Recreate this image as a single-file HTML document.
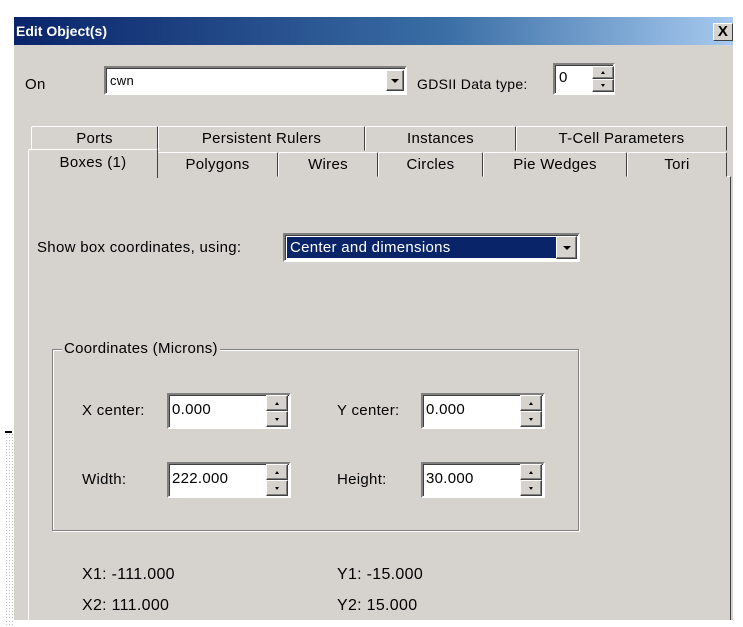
<!DOCTYPE html>
<html><head><style>
*{margin:0;padding:0;box-sizing:border-box}
body{width:743px;height:627px;background:#fff;position:relative;overflow:hidden;font-family:"Liberation Sans",sans-serif;font-size:15px;letter-spacing:0.3px;color:#000}
.a{position:absolute}
.dlg{left:14px;top:17px;width:719px;height:603px;background:#d6d3ce}
.title{left:14px;top:17px;width:719px;height:28px;background:linear-gradient(90deg,#0a246a,#3a6ea5 60%,#a6caf0);color:#fff;font-weight:bold;font-size:14px;letter-spacing:0;line-height:28px;padding-left:2px}
.close{left:713px;top:23px;width:20px;height:18px;background:#d6d3ce;border:1px solid;border-color:#fff #404040 #404040 #fff;font-weight:bold;font-size:15px;line-height:16px;text-align:center}
.sunk{background:#fff;border:2px solid;border-color:#808080 #fff #fff #808080;box-shadow:inset 1px 1px 0 #404040}
.btn{background:#d6d3ce;border:1px solid;border-color:#fff #404040 #404040 #fff;box-shadow:inset -1px -1px 0 #808080}
.tab{background:#d6d3ce;border:1px solid;border-color:#fff #404040 transparent #fff;border-radius:2px 2px 0 0;text-align:center;line-height:24px;height:25px}
.tri{width:0;height:0;border-left:4px solid transparent;border-right:4px solid transparent;border-top:4px solid #000;margin:auto}
.up{border-top:0;border-bottom:3px solid #000;border-left:2px solid transparent;border-right:2px solid transparent}
.dn{border-top:3px solid #000;border-left:2px solid transparent;border-right:2px solid transparent}
.spin{width:22px}
.spin div.btn{height:50%;display:flex;align-items:center;justify-content:center}
.inp{line-height:30px;padding:0 3px !important}
</style></head><body>
<div class="a" style="left:5px;top:433px;width:9px;height:187px;background-image:radial-gradient(#bbb 0.6px,transparent 0.8px);background-size:3px 3px"></div>
<div class="a" style="left:5px;top:431px;width:7px;height:2px;background:#000"></div>
<div class="a dlg"></div>
<div class="a title">Edit Object(s)</div>
<div class="a close">X</div>

<div class="a" style="left:25px;top:76px">On</div>
<div class="a sunk" style="left:104px;top:66px;width:303px;height:29px;padding:0 4px;font-size:13px;line-height:25px">cwn</div>
<div class="a btn" style="left:386px;top:70px;width:18px;height:21px;padding-top:8px"><div class="tri"></div></div>
<div class="a" style="left:417px;top:76px;font-size:14px">GDSII Data type:</div>
<div class="a sunk" style="left:553px;top:63px;width:62px;height:32px;padding:0 4px;line-height:26px">0</div>
<div class="a spin" style="left:592px;top:66px;height:26px"><div class="btn"><div class="up"></div></div><div class="btn"><div class="dn"></div></div></div>

<div class="a" style="left:28px;top:176px;width:703px;height:450px;border-left:1px solid #fff;border-right:1px solid #404040;border-top:1px solid #fff"></div>
<div class="a tab" style="left:31px;top:126px;width:127px">Ports</div>
<div class="a tab" style="left:158px;top:126px;width:207px">Persistent Rulers</div>
<div class="a tab" style="left:365px;top:126px;width:151px">Instances</div>
<div class="a tab" style="left:516px;top:126px;width:211px">T-Cell Parameters</div>
<div class="a tab" style="left:157px;top:152px;width:121px;height:25px">Polygons</div>
<div class="a tab" style="left:278px;top:152px;width:100px;height:25px">Wires</div>
<div class="a tab" style="left:378px;top:152px;width:105px;height:25px">Circles</div>
<div class="a tab" style="left:483px;top:152px;width:144px;height:25px">Pie Wedges</div>
<div class="a tab" style="left:627px;top:152px;width:100px;height:25px">Tori</div>
<div class="a tab" style="left:28px;top:149px;width:130px;height:29px;border-bottom:0;line-height:26px">Boxes (1)</div>

<div class="a" style="left:37px;top:239px">Show box coordinates, using:</div>
<div class="a sunk" style="left:283px;top:233px;width:297px;height:29px;padding:2px"><div style="background:#0a246a;color:#fff;height:100%;width:270px;padding-left:3px;line-height:21px">Center and dimensions</div></div>
<div class="a btn" style="left:556px;top:236px;width:21px;height:23px;padding-top:9px"><div class="tri"></div></div>

<div class="a" style="left:52px;top:349px;width:527px;height:182px;border:1px solid #808080;box-shadow:1px 1px 0 #fff,inset 1px 1px 0 #fff"></div>
<div class="a" style="left:62px;top:340px;background:#d6d3ce;padding:0 2px">Coordinates (Microns)</div>

<div class="a" style="left:82px;top:402px">X center:</div>
<div class="a sunk inp" style="left:167px;top:393px;width:124px;height:36px">0.000</div>
<div class="a spin" style="left:266px;top:395px;height:32px"><div class="btn"><div class="up"></div></div><div class="btn"><div class="dn"></div></div></div>
<div class="a" style="left:337px;top:402px">Y center:</div>
<div class="a sunk inp" style="left:421px;top:393px;width:124px;height:36px">0.000</div>
<div class="a spin" style="left:520px;top:395px;height:32px"><div class="btn"><div class="up"></div></div><div class="btn"><div class="dn"></div></div></div>

<div class="a" style="left:82px;top:471px">Width:</div>
<div class="a sunk inp" style="left:167px;top:462px;width:124px;height:36px">222.000</div>
<div class="a spin" style="left:266px;top:464px;height:32px"><div class="btn"><div class="up"></div></div><div class="btn"><div class="dn"></div></div></div>
<div class="a" style="left:337px;top:471px">Height:</div>
<div class="a sunk inp" style="left:421px;top:462px;width:124px;height:36px">30.000</div>
<div class="a spin" style="left:520px;top:464px;height:32px"><div class="btn"><div class="up"></div></div><div class="btn"><div class="dn"></div></div></div>

<div class="a" style="left:82px;top:566px;font-size:16px">X1: -111.000</div>
<div class="a" style="left:337px;top:566px;font-size:16px">Y1: -15.000</div>
<div class="a" style="left:82px;top:597px;font-size:16px">X2: 111.000</div>
<div class="a" style="left:337px;top:597px;font-size:16px">Y2: 15.000</div>
<div class="a" style="left:0;top:620px;width:743px;height:7px;background:#fff"></div>
<div class="a" style="left:5px;top:620px;width:9px;height:7px;background-image:radial-gradient(#bbb 0.6px,transparent 0.8px);background-size:3px 3px"></div>
</body></html>
